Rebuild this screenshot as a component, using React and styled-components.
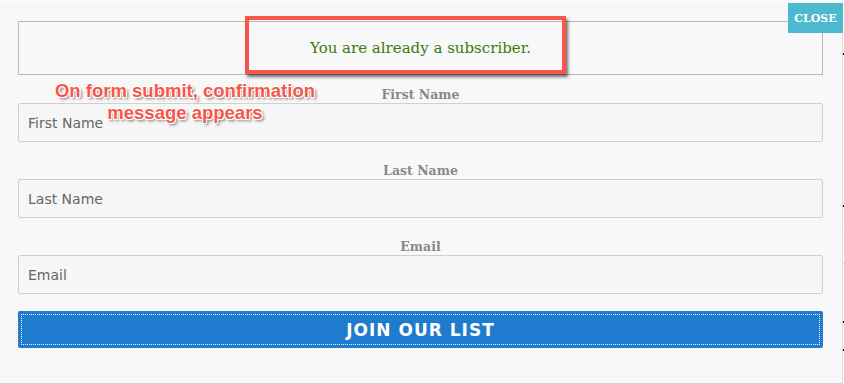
import React from "react";
import styled, { createGlobalStyle } from "styled-components";

const GlobalStyle = createGlobalStyle`
  html, body {
    margin: 0;
    padding: 0;
    background: #ffffff;
  }
  * {
    box-sizing: border-box;
  }
`;

const fields = ["First Name", "Last Name", "Email"];
const ticks = [53, 205, 321, 349];

const App = () => {
  return (
    <>
      <GlobalStyle />
      <Page>
        <Modal>
          <Message>You are already a subscriber.</Message>
          {fields.map((f) => (
            <Field key={f}>
              <Label>{f}</Label>
              <Input placeholder={f} />
            </Field>
          ))}
          <SubmitBtn type="button">Join our list</SubmitBtn>

          <Callout />
          <Note>
            On form submit, confirmation
            <br />
            message appears
          </Note>
          <CloseBtn type="button">CLOSE</CloseBtn>
        </Modal>
        <Behind>
          {ticks.map((t) => (
            <Tick key={t} style={{ top: t }} />
          ))}
          <Rule style={{ top: 229 }} />
          <Rule style={{ top: 263 }} />
        </Behind>
      </Page>
    </>
  );
};

export default App;

const Page = styled.div`
  display: flex;
  width: 844px;
  height: 384px;
  overflow: hidden;
`;

const Modal = styled.div`
  position: relative;
  width: 843px;
  height: 384px;
  display: flex;
  flex-direction: column;
  padding: 21px 19px 0 18px;
  background: #f8f8f8;
  border-top: 2px solid #fbfbfb;
  border-right: 1px solid #dedede;
  border-bottom: 1px solid #d4d4d4;
`;

const Message = styled.div`
  height: 54px;
  margin-top: -2px;
  margin-bottom: 8px;
  border: 1px solid #b8b8b8;
  display: flex;
  align-items: center;
  justify-content: center;
  color: #3c7a0c;
  font-family: "DejaVu Serif", serif;
  font-size: 15px;
`;

const Field = styled.div`
  display: flex;
  flex-direction: column;
  & + & {
    margin-top: 17px;
  }
`;

const Label = styled.label`
  display: block;
  height: 20px;
  padding-top: 2px;
  line-height: 20px;
  text-align: center;
  color: #888888;
  font-family: "DejaVu Serif", serif;
  font-weight: bold;
  font-size: 12.5px;
`;

const Input = styled.input`
  height: 39px;
  width: 100%;
  border: 1px solid #d0d0d0;
  border-radius: 2px;
  background: #f6f6f6;
  padding: 0 9px;
  font-family: "DejaVu Sans", sans-serif;
  font-size: 14px;
  color: #666;
  outline: none;
  &::placeholder {
    color: #666;
  }
`;

const SubmitBtn = styled.button`
  margin-top: 17px;
  height: 37px;
  width: 100%;
  background: #1f7bcd;
  border: none;
  border-radius: 2px;
  outline: 1px dotted #ffffff;
  outline-offset: -4px;
  color: #ffffff;
  font-family: "DejaVu Sans", sans-serif;
  font-weight: bold;
  font-size: 17px;
  letter-spacing: 1px;
  text-transform: uppercase;
  cursor: pointer;
`;

const Callout = styled.div`
  position: absolute;
  left: 245px;
  top: 14px;
  width: 321px;
  height: 58px;
  border: 4px solid #f6574a;
  box-shadow: 2px 3px 3px rgba(0, 0, 0, 0.55);
  pointer-events: none;
`;

const Note = styled.div`
  position: absolute;
  left: 25px;
  top: 78px;
  width: 320px;
  text-align: center;
  color: #f6574a;
  font-family: "Liberation Sans", Arial, sans-serif;
  font-weight: bold;
  font-size: 18.5px;
  line-height: 22px;
  text-shadow: -1px -1px 0 #fff, 1px -1px 0 #fff, -1px 1px 0 #fff,
    1px 1px 0 #fff, 2px 2px 3px rgba(0, 0, 0, 0.6);
  pointer-events: none;
`;

const CloseBtn = styled.button`
  position: absolute;
  top: 1px;
  right: -1px;
  width: 55px;
  height: 30px;
  border: none;
  background: #4db9cf;
  color: #ffffff;
  font-family: "DejaVu Serif", serif;
  font-weight: bold;
  font-size: 11px;
  cursor: pointer;
`;

const Behind = styled.div`
  position: relative;
  flex: 1;
  background: #ffffff;
`;

const Tick = styled.div`
  position: absolute;
  left: 0;
  width: 2px;
  height: 2px;
  background: #111;
`;

const Rule = styled.div`
  position: absolute;
  left: 0;
  width: 2px;
  height: 1px;
  background: #cfcfcf;
`;
